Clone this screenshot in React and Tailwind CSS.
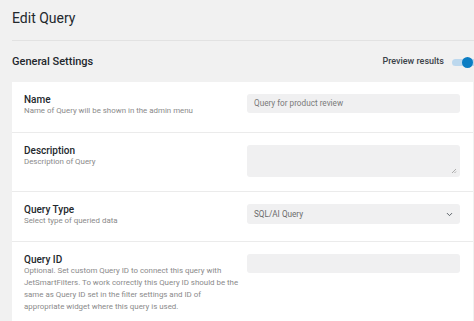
import { ChevronDown } from 'lucide-react';

const font = { fontFamily: 'Roboto, "Liberation Sans", sans-serif' };

function Row({ label, desc, children, last, pb = 'pb-[15px]' }) {
  return (
    <div className={`flex items-start gap-[7px] pl-3 pr-[13px] pt-3 ${last ? 'pb-6' : `${pb} border-b border-[#ebebeb]`}`}>
      <div className="w-[216px] flex-none">
        <div className="text-[10px] leading-[11px] font-medium text-[#23282d]">{label}</div>
        <div className="text-[7.9px] leading-[12px] text-[#8a8a8a]">{desc}</div>
      </div>
      <div className="flex-1">{children}</div>
    </div>
  );
}

export default function App() {
  return (
    <div style={font} className="w-[474px] h-[321px] overflow-hidden bg-[#f1f1f1] pl-3">
      {/* Title */}
      <div className="h-[41px] flex items-center border-b border-[#e2e2e2]">
        <h1 className="text-[14px] text-[#23282d] -mt-[3px]">Edit Query</h1>
      </div>

      {/* Section head */}
      <div className="h-[41px] flex items-center justify-between mr-px">
        <h2 className="text-[11px] font-medium text-[#23282d] mt-px">General Settings</h2>
        <div className="flex items-center gap-2 -mr-[5px] mt-px">
          <span className="text-[9px] font-medium text-[#3c434a]">Preview results</span>
          <div className="relative w-[26px] h-[7px] rounded-full bg-[#bcd8ee]">
            <div className="absolute right-[5px] -top-[2px] w-[11px] h-[11px] rounded-full bg-[#0b7dc3]" />
          </div>
        </div>
      </div>

      {/* Card */}
      <div className="bg-white mr-px">
        <Row label="Name" desc="Name of Query will be shown in the admin menu">
          <div className="h-[19px] rounded-[3px] bg-[#f0f0f1] flex items-center px-[7px] text-[8.2px] text-[#7a7a7a]">
            Query for product review
          </div>
        </Row>
        <Row label="Description" desc="Description of Query" pb="pb-[14px]">
          <div className="relative h-[32px] rounded-[3px] bg-[#f0f0f1]">
            <svg className="absolute right-[3px] bottom-[3px]" width="6" height="6" viewBox="0 0 6 6">
              <path d="M1 5 L5 1 M3.5 5 L5 3.5" stroke="#9a9a9a" strokeWidth="0.8" />
            </svg>
          </div>
        </Row>
        <Row label="Query Type" desc="Select type of queried data" pb="pb-[14px]">
          <div className="h-[20px] rounded-[3px] bg-[#f0f0f1] flex items-center justify-between pl-[7px] pr-[6px] text-[8.2px] text-[#6b6b6b]">
            <span>SQL/AI Query</span>
            <ChevronDown size={9} strokeWidth={2.5} className="text-[#50575e]" />
          </div>
        </Row>
        <Row
          last
          label="Query ID"
          desc="Optional. Set custom Query ID to connect this query with JetSmartFilters. To work correctly this Query ID should be the same as Query ID set in the filter settings and ID of appropriate widget where this query is used."
        >
          <div className="h-[19px] rounded-[3px] bg-[#f0f0f1]" />
        </Row>
      </div>
    </div>
  );
}
